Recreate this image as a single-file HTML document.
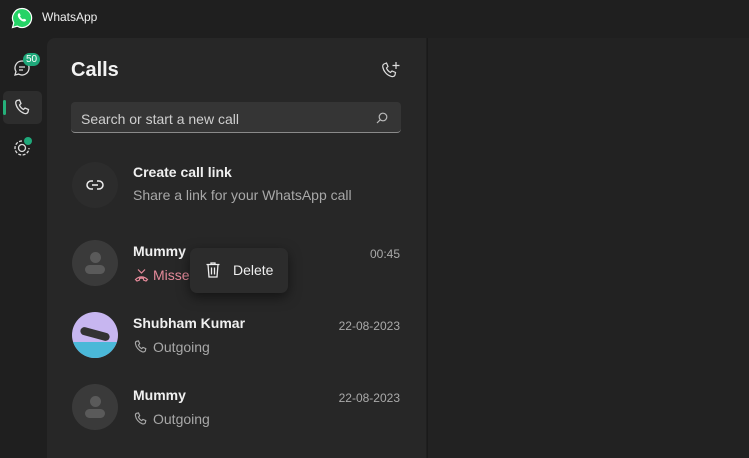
<!DOCTYPE html><html><head><style>
body{margin:0;width:749px;height:447px;background:#1f1f1f;font-family:"Segoe UI","Liberation Sans",sans-serif;overflow:hidden;position:relative;color:#fff}
.a{position:absolute}
.panel{left:47px;top:38px;width:379px;height:420px;background:#272727;border-top-left-radius:8px}
.right{left:427px;top:38px;width:330px;height:420px;background:#222;border-left:1px solid #1a1a1a}
.av{width:46px;height:46px;border-radius:50%;background:#3a3a3a;position:absolute;left:72px;overflow:hidden}
.av .h{position:absolute;left:18px;top:12px;width:11px;height:11px;border-radius:50%;background:#5a5a5a}
.av .b{position:absolute;left:13px;top:25px;width:20px;height:9px;border-radius:5px;background:#5a5a5a}
.nm{left:133px;font-weight:bold;font-size:14px;color:#f0f0f0}
.sub{left:153px;font-size:14px;color:#a8a8a8}
.tm{right:349px;font-size:12px;color:#aaa;text-align:right}
</style></head><body>
<svg class="a" style="left:11px;top:7px" width="22" height="22" viewBox="0 0 22 22"><path d="M11 1.5a9.5 9.5 0 0 0-8.2 14.3L1.5 20.5l4.8-1.3A9.5 9.5 0 1 0 11 1.5z" fill="#25d366" stroke="#fff" stroke-width="1.2"/><path d="M7.5 6.5c.5-.5 1.2-.4 1.4.2l.7 1.6c.1.4-.3.8-.6 1.1.6 1.3 1.7 2.4 3 3 .3-.3.7-.8 1.1-.6l1.6.7c.5.2.6.9.1 1.4-1.6 1.6-4.2.2-5.8-1.4S5.9 8.1 7.5 6.5z" fill="#fff"/></svg>
<div class="a" style="left:42px;top:10px;font-size:12px;color:#eee">WhatsApp</div>
<svg class="a" style="left:13px;top:59px" width="18" height="18" viewBox="0 0 18 18" fill="none" stroke="#ddd" stroke-width="1.3"><path d="M9 2a7 7 0 1 1-3.4 13.1L2 16l1-3.4A7 7 0 0 1 9 2z"/><path d="M6 8h6M6 11h4"/></svg>
<div class="a" style="left:23px;top:53px;width:17px;height:13px;border-radius:7px;background:#1fa87a;font-size:10px;text-align:center;line-height:13px;color:#fff">50</div>
<div class="a" style="left:3px;top:91px;width:39px;height:33px;background:#2d2d2d;border-radius:5px"></div>
<div class="a" style="left:3px;top:100px;width:3px;height:15px;background:#25b07a;border-radius:2px"></div>
<svg class="a" style="left:14px;top:99px" width="16" height="17" viewBox="0 0 16 17" fill="none" stroke="#ddd" stroke-width="1.3"><path d="M3 1.5l2.5-.5 1.5 3.5-1.5 1.5c.7 2 2 3.5 4 4.5l1.5-1.5 3.5 1.5-.5 2.5c-.5 1.5-2.5 2-4 1.3C5.5 12.5 2.5 8.5 1.8 4.5 1.6 3 2 2 3 1.5z"/></svg>
<svg class="a" style="left:13px;top:139px" width="18" height="18" viewBox="0 0 18 18" fill="none" stroke="#ddd" stroke-width="1.3"><path d="M9 2a7 7 0 1 0 7 7" stroke-dasharray="3 1.5"/><circle cx="9" cy="9" r="3.5"/></svg>
<div class="a" style="left:24px;top:137px;width:8px;height:8px;border-radius:50%;background:#1fa87a"></div>
<div class="a panel"></div><div class="a right"></div>
<div class="a" style="left:71px;top:59px;font-size:20px;font-weight:bold;color:#f2f2f2">Calls</div>
<svg class="a" style="left:381px;top:60px" width="20" height="20" viewBox="0 0 20 20" fill="none" stroke="#ddd" stroke-width="1.2"><path d="M3 4l2.5-1 1.5 3.5-1.5 1.5c.7 2 2 3.5 4 4.5l1.5-1.5 3.5 1.5-.5 2.5c-.5 1.5-2.5 2-4 1.3C5.5 15 2.5 11 1.8 7 1.6 5.5 2 4.5 3 4z"/><path d="M15 2v7M11.5 5.5h7"/></svg>
<div class="a" style="left:71px;top:102px;width:330px;height:31px;background:#353535;border-radius:4px;border-bottom:1px solid #8a8a8a;box-sizing:border-box"></div>
<div class="a" style="left:81px;top:111px;font-size:14px;color:#cfcfcf">Search or start a new call</div>
<svg class="a" style="left:376px;top:112px" width="12" height="12" viewBox="0 0 12 12" fill="none" stroke="#bbb" stroke-width="1.2"><circle cx="7" cy="5" r="3.8"/><path d="M4.2 7.8L1 11"/></svg>
<div class="av" style="top:162px;background:#2c2c2c"></div>
<svg class="a" style="left:86px;top:179px" width="18" height="12" viewBox="0 0 18 12" fill="none" stroke="#eee" stroke-width="1.5"><path d="M7 2H5a4 4 0 0 0 0 8h2M11 2h2a4 4 0 0 1 0 8h-2M6 6h6"/></svg>
<div class="a nm" style="top:164px">Create call link</div>
<div class="a sub" style="left:133px;top:187px">Share a link for your WhatsApp call</div>
<div class="av" style="top:240px"><div class="h"></div><div class="b"></div></div>
<div class="a nm" style="top:243px">Mummy</div>
<svg class="a" style="left:134px;top:268px" width="15" height="14" viewBox="0 0 15 14" fill="none" stroke="#e58a9a" stroke-width="1.2"><path d="M1.5 11.5c3.5-3.5 8.5-3.5 12 0l-1.5 1.5-2.5-1v-1.5a6 6 0 0 0-4 0V12l-2.5 1z"/><path d="M4 1.5l3.5 3.5 3.5-3.5"/></svg>
<div class="a sub" style="top:267px;color:#e58a9a">Missed</div>
<div class="a tm" style="top:247px">00:45</div>
<div class="av" style="top:312px;background:#c7b6f0"><div style="position:absolute;left:0;top:30px;width:46px;height:16px;background:#4ab8d8"></div><div style="position:absolute;left:8px;top:18px;width:30px;height:8px;background:#333;border-radius:4px;transform:rotate(15deg)"></div></div>
<div class="a nm" style="top:315px">Shubham Kumar</div>
<svg class="a" style="left:134px;top:340px" width="13" height="14" viewBox="0 0 16 17" fill="none" stroke="#aaa" stroke-width="1.4"><path d="M3 1.5l2.5-.5 1.5 3.5-1.5 1.5c.7 2 2 3.5 4 4.5l1.5-1.5 3.5 1.5-.5 2.5c-.5 1.5-2.5 2-4 1.3C5.5 12.5 2.5 8.5 1.8 4.5 1.6 3 2 2 3 1.5z"/></svg>
<div class="a sub" style="top:339px">Outgoing</div>
<div class="a tm" style="top:319px">22-08-2023</div>
<div class="av" style="top:384px"><div class="h"></div><div class="b"></div></div>
<div class="a nm" style="top:387px">Mummy</div>
<svg class="a" style="left:134px;top:412px" width="13" height="14" viewBox="0 0 16 17" fill="none" stroke="#aaa" stroke-width="1.4"><path d="M3 1.5l2.5-.5 1.5 3.5-1.5 1.5c.7 2 2 3.5 4 4.5l1.5-1.5 3.5 1.5-.5 2.5c-.5 1.5-2.5 2-4 1.3C5.5 12.5 2.5 8.5 1.8 4.5 1.6 3 2 2 3 1.5z"/></svg>
<div class="a sub" style="top:411px">Outgoing</div>
<div class="a tm" style="top:391px">22-08-2023</div>
<div class="a" style="left:190px;top:248px;width:98px;height:45px;background:#2c2c2c;border-radius:7px;box-shadow:0 4px 12px rgba(0,0,0,.5)"></div>
<svg class="a" style="left:205px;top:261px" width="16" height="18" viewBox="0 0 16 18" fill="none" stroke="#eee" stroke-width="1.3"><path d="M1.5 3.5h13M6 3.5V2h4v1.5M3 3.5l1 12.5h8l1-12.5M6.5 6.5v7M9.5 6.5v7"/></svg>
<div class="a" style="left:233px;top:262px;font-size:14px;color:#eee">Delete</div>
</body></html>
